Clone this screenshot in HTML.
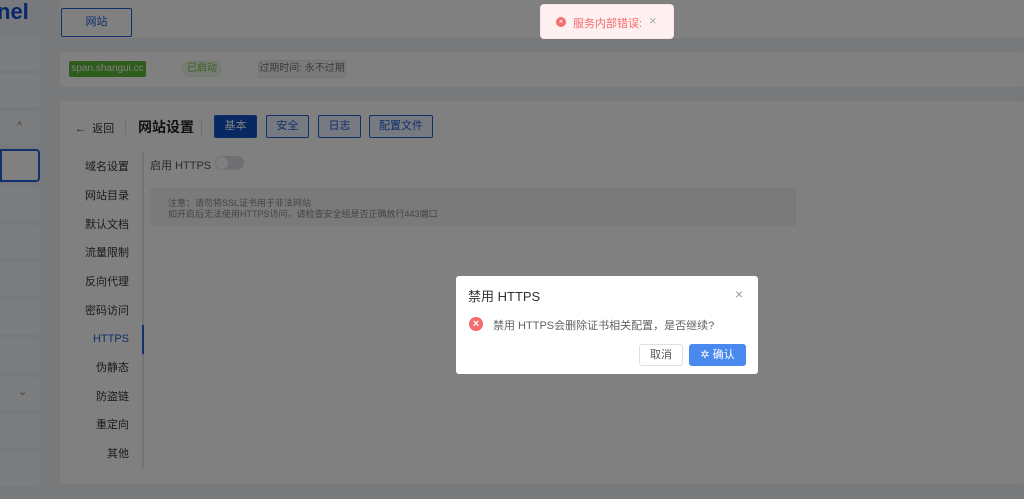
<!DOCTYPE html>
<html><head><meta charset="utf-8"><style>
*{box-sizing:border-box;margin:0;padding:0}
html,body{width:1024px;height:499px;overflow:hidden}
body{background:#78797a;font-family:"Liberation Sans","Noto Sans CJK SC",sans-serif;position:relative;font-size:11px;color:#1a1a1a}
.abs{position:absolute}
.side{left:0;top:0;width:45px;height:499px;background:#77797c;overflow:hidden}
.sb{position:absolute;left:0;width:40px;height:33px;background:#7c7d7e;border-radius:0 4px 4px 0}
.card{background:#808080;border-radius:4px}
.btn{position:absolute;height:23px;border:1px solid #102f6b;color:#102f6b;background:#777a80;border-radius:2px;font-size:11px;text-align:center;line-height:21px}
.mi{position:absolute;right:13px;width:82px;text-align:right;font-size:11px;line-height:14px;color:#1a1a1a}
</style></head><body>
<div class="abs side">
<div class="abs" style="top:0;font-size:22px;font-weight:bold;color:#07286a;line-height:24px;left:-3px">nel</div>
<div class="sb" style="top:37px"></div><div class="sb" style="top:74px"></div>
<div class="sb" style="top:111px"></div><div class="abs" style="left:17px;top:120px;color:#444">^</div>
<div class="sb" style="top:149px;border:2px solid #102f6b;background:#808080"></div>
<div class="sb" style="top:187px"></div><div class="sb" style="top:225px"></div><div class="sb" style="top:263px"></div><div class="sb" style="top:301px"></div><div class="sb" style="top:339px"></div><div class="sb" style="top:377px"></div><div class="abs" style="left:18px;top:385px;color:#444">⌄</div><div class="sb" style="top:415px"></div><div class="sb" style="top:453px"></div>
</div>
<div class="abs card" style="left:60px;top:0;width:964px;height:38px"></div>
<div class="btn" style="left:61px;top:8px;width:71px;height:29px;line-height:27px;background:#808080">网站</div>
<div class="abs card" style="left:60px;top:52px;width:964px;height:35px"></div>
<div class="abs" style="left:69px;top:61px;width:77px;height:16px;background:#2e5c1d;color:#808080;border-radius:2px;font-size:10px;text-align:center;line-height:16px">span.shangui.cc</div>
<div class="abs" style="left:182px;top:61px;width:40px;height:16px;background:#787c76;border:1px solid #70796c;color:#34611d;border-radius:8px;font-size:10px;text-align:center;line-height:14px">已启动</div>
<div class="abs" style="left:258px;top:60px;width:88px;height:18px;background:#7a7a7a;border:1px solid #747475;color:#3b3b3b;border-radius:3px;font-size:10px;text-align:center;line-height:16px">过期时间: 永不过期</div>
<div class="abs card" style="left:60px;top:101px;width:964px;height:383px"></div>
<div class="abs" style="left:75px;top:120px;font-size:11px">←&nbsp; 返回</div>
<div class="abs" style="left:125px;top:119px;width:1px;height:16px;background:#6f6f6f"></div>
<div class="abs" style="left:138px;top:117px;font-size:14px;font-weight:bold;color:#111">网站设置</div>
<div class="abs" style="left:201px;top:119px;width:1px;height:16px;background:#6f6f6f"></div>
<div class="btn" style="left:214px;top:115px;width:43px;background:#072860;color:#808080">基本</div>
<div class="btn" style="left:266px;top:115px;width:43px">安全</div>
<div class="btn" style="left:318px;top:115px;width:43px">日志</div>
<div class="btn" style="left:369px;top:115px;width:64px">配置文件</div>
<div class="abs" style="left:60px;top:152px;width:82px;height:316px">
<div class="mi" style="top:8px">域名设置</div><div class="mi" style="top:37px">网站目录</div><div class="mi" style="top:66px">默认文档</div><div class="mi" style="top:94px">流量限制</div><div class="mi" style="top:123px">反向代理</div><div class="mi" style="top:152px">密码访问</div><div class="mi" style="top:180px;color:#102f6b">HTTPS</div><div class="mi" style="top:209px">伪静态</div><div class="mi" style="top:238px">防盗链</div><div class="mi" style="top:266px">重定向</div><div class="mi" style="top:295px">其他</div>
</div>
<div class="abs" style="left:142px;top:152px;width:2px;height:316px;background:#727374"></div>
<div class="abs" style="left:142px;top:325px;width:2px;height:29px;background:#102f6b"></div>
<div class="abs" style="left:150px;top:157px;font-size:11px;color:#2b2b2b">启用 HTTPS</div>
<div class="abs" style="left:215px;top:156px;width:29px;height:14px;border-radius:7px;background:#6e7073"><div class="abs" style="left:1px;top:1px;width:12px;height:12px;border-radius:6px;background:#808080"></div></div>
<div class="abs" style="left:150px;top:188px;width:646px;height:38px;background:#7a7a7a;border-radius:3px;font-size:9px;color:#444;padding:10px 0 0 18px;line-height:11px">注意：请勿将SSL证书用于非法网站<br>如开启后无法使用HTTPS访问，请检查安全组是否正确放行443端口</div>
<div class="abs" style="left:540px;top:4px;width:134px;height:35px;background:#fef0f0;border:1px solid #fde2e2;border-radius:4px">
<div class="abs" style="left:15px;top:12px;width:10px;height:10px;border-radius:5px;background:#f56c6c;color:#fff;font-size:8px;text-align:center;line-height:10px">×</div>
<div class="abs" style="left:32px;top:10px;color:#f56c6c;font-size:11px">服务内部错误:</div>
<div class="abs" style="left:108px;top:8px;color:#aaa;font-size:13px">×</div>
</div>
<div class="abs" style="left:456px;top:276px;width:302px;height:98px;background:#fff;border-radius:3px">
<div class="abs" style="left:12px;top:10px;font-size:13px;color:#303133">禁用 HTTPS</div>
<div class="abs" style="left:279px;top:10px;font-size:14px;color:#999">×</div>
<div class="abs" style="left:13px;top:41px;width:14px;height:14px;border-radius:7px;background:#f56c6c;color:#fff;font-size:11px;font-weight:bold;text-align:center;line-height:14px">×</div>
<div class="abs" style="left:37px;top:41px;font-size:11px;color:#606266">禁用 HTTPS会删除证书相关配置，是否继续?</div>
<div class="abs" style="left:183px;top:68px;width:44px;height:22px;border:1px solid #dcdfe6;border-radius:3px;text-align:center;line-height:20px;font-size:11px;color:#555">取消</div>
<div class="abs" style="left:233px;top:68px;width:57px;height:22px;background:#4a8af0;border-radius:3px;text-align:center;line-height:22px;font-size:11px;color:#fff">✲ 确认</div>
</div>
</body></html>
